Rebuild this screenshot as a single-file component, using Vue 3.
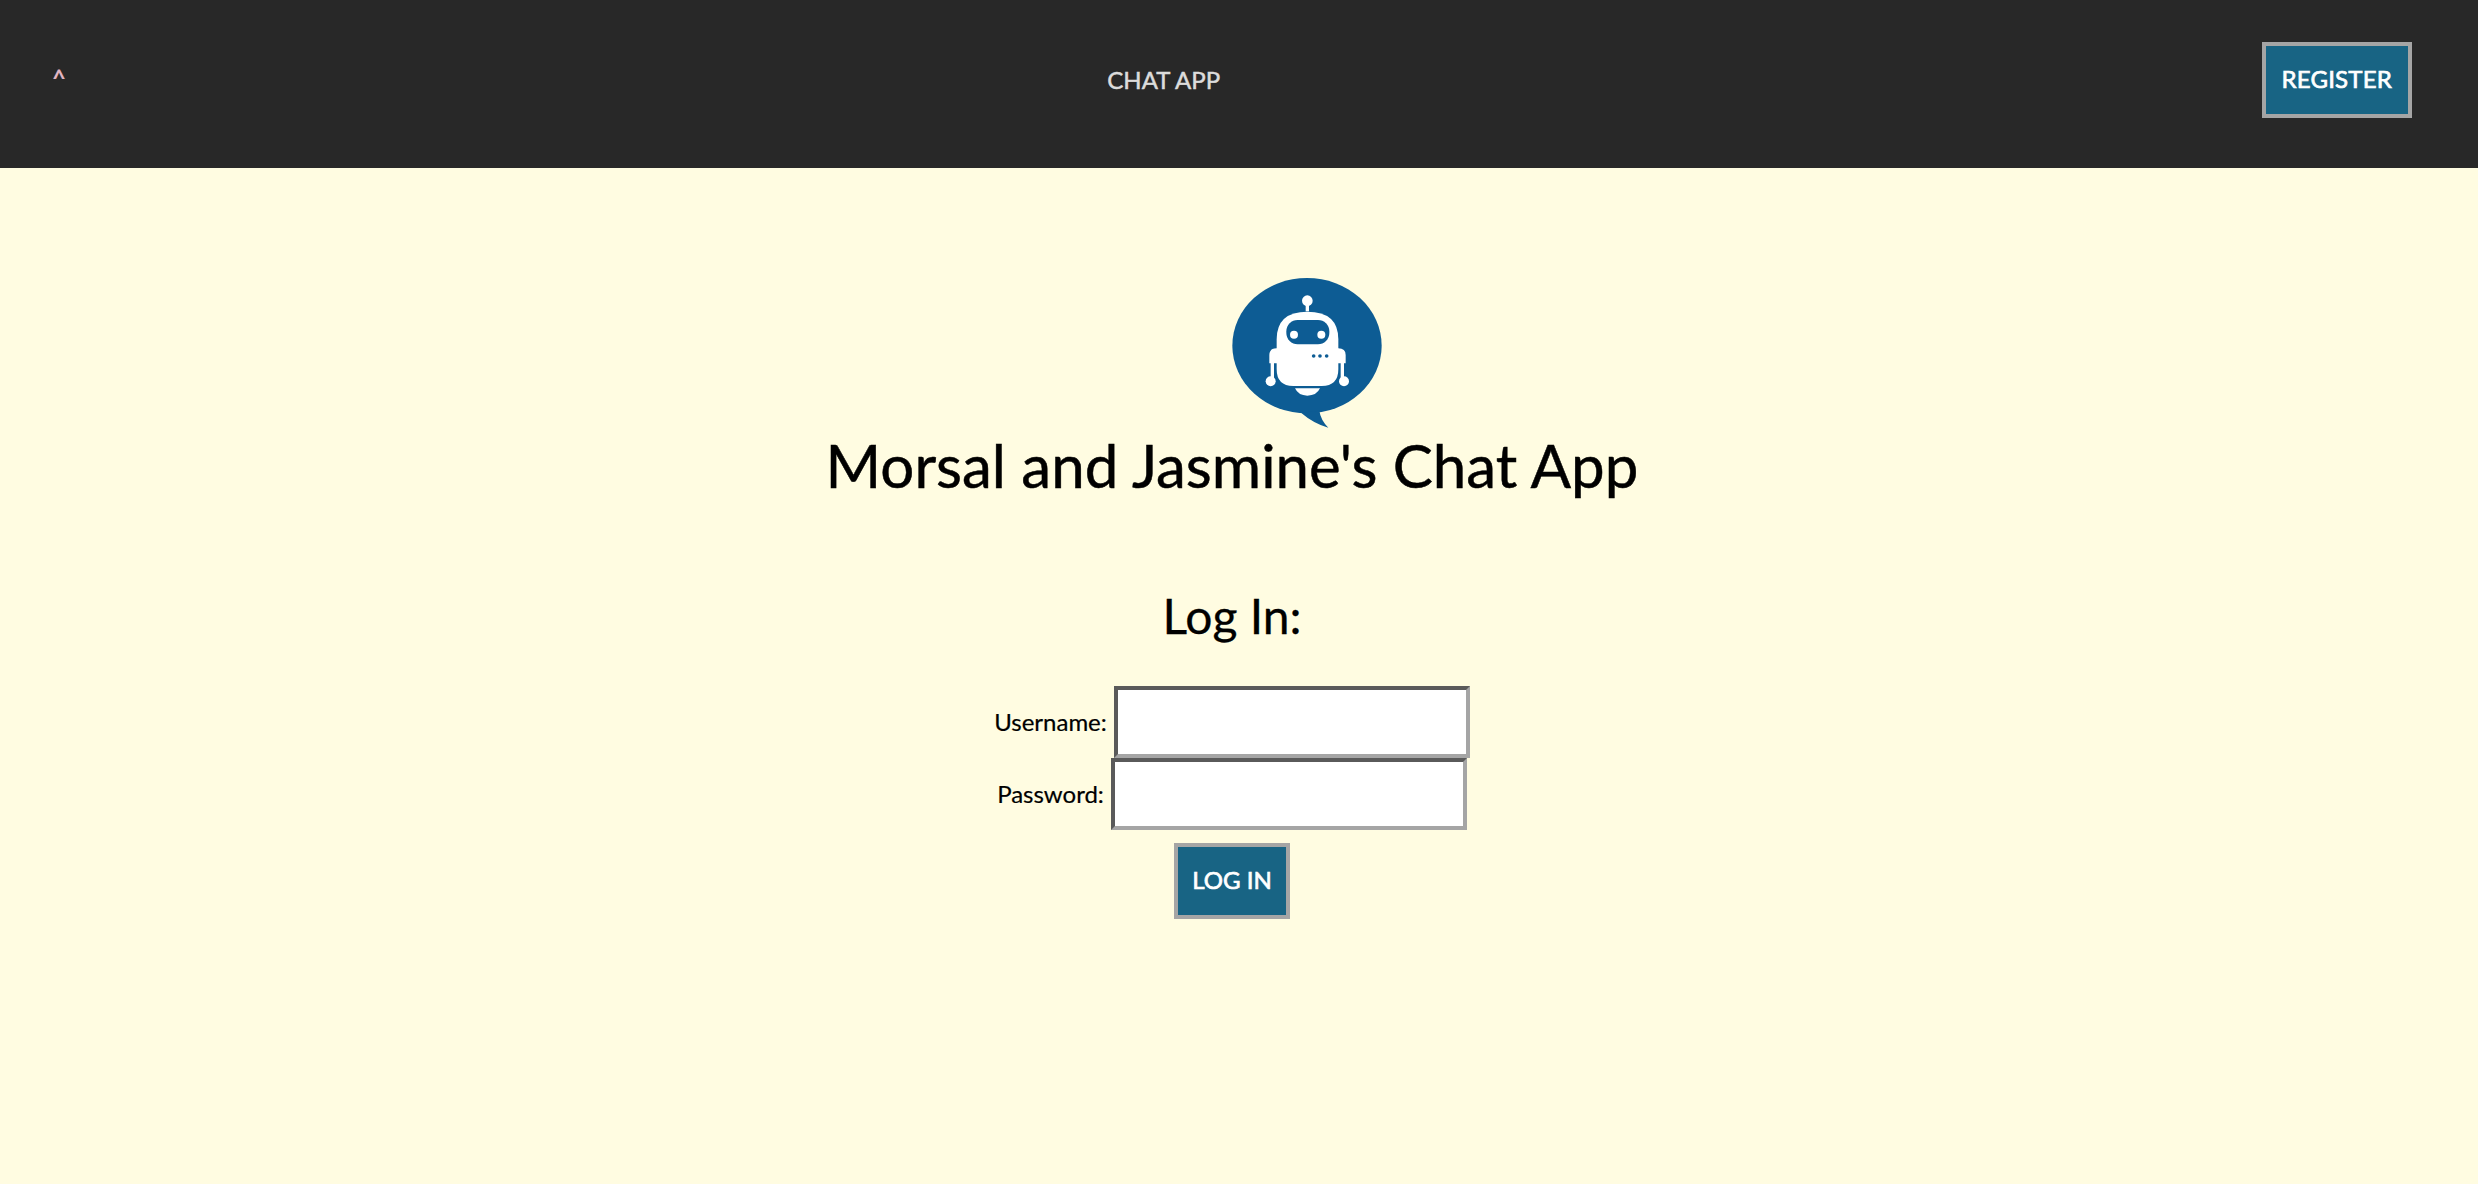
<template>
  <div class="page">
    <header class="topbar">
      <a class="caret" href="#">^</a>
      <span class="brand">CHAT APP</span>
      <button class="btn" type="button">REGISTER</button>
    </header>

    <main class="content">
      <svg class="logo" viewBox="97 54 448 450" xmlns="http://www.w3.org/2000/svg">
        <ellipse cx="321" cy="257" rx="224" ry="203" fill="#0d5c94" />
        <path d="M303 458 Q340 490 385 503 Q362 480 358 452 Z" fill="#0d5c94" />
        <g fill="#fff">
          <circle cx="322" cy="122" r="16" />
          <rect x="317" y="130" width="10" height="24" />
          <path d="M230 270 V238 Q230 155 322 155 Q415 155 415 238 V270 Z" />
          <path d="M208 310 V285 Q208 265 230 265 H415 Q437 265 437 285 V310 H415 V328 Q415 378 365 378 H280 Q230 378 230 328 V310 Z" />
          <rect x="212" y="300" width="10" height="60" />
          <rect x="422" y="300" width="10" height="60" />
          <circle cx="212" cy="364" r="15" />
          <circle cx="432" cy="364" r="15" />
          <path d="M285 385 H360 Q350 407 322 407 Q295 407 285 385 Z" />
        </g>
        <rect x="259" y="180" width="129" height="73" rx="34" fill="#0d5c94" />
        <g fill="#fff">
          <circle cx="282" cy="224" r="12" />
          <circle cx="364" cy="224" r="12" />
        </g>
        <g fill="#0d5c94">
          <circle cx="341" cy="288" r="5.5" />
          <circle cx="360" cy="288" r="5.5" />
          <circle cx="380" cy="288" r="5.5" />
        </g>
      </svg>

      <h1 class="title">Morsal and Jasmine's Chat App</h1>
      <h2 class="subtitle">Log In:</h2>

      <form class="form" @submit.prevent>
        <div class="field">
          <label for="username">Username:</label>
          <input id="username" type="text" v-model="username" />
        </div>
        <div class="field">
          <label for="password">Password:</label>
          <input id="password" type="password" v-model="password" />
        </div>
        <button class="btn login" type="submit">LOG IN</button>
      </form>
    </main>
  </div>
</template>

<script setup>
import { ref } from "vue";

const username = ref("");
const password = ref("");
</script>

<style>
html,
body {
  margin: 0;
  background: #fffce1;
}
</style>

<style scoped>
.page {
  min-height: 1184px;
  background: #fffce1;
  font-family: Lato, "Liberation Sans", sans-serif;
  color: #000;
}
.topbar {
  height: 168px;
  box-sizing: border-box;
  background: #282828;
  display: flex;
  align-items: center;
  justify-content: space-between;
  padding: 0 66px 8px 52px;
  font-size: 24px;
}
.caret {
  color: #e0b4c2;
  text-decoration: none;
  font-size: 24px;
  font-weight: 700;
  margin-top: -4px;
}
.brand {
  color: #dcdcdc;
  -webkit-text-stroke: 0.5px #dcdcdc;
  margin: -2px 0 0;
}
.btn {
  height: 76px;
  box-sizing: border-box;
  padding: 0 16px 3px;
  background: #186484;
  border: 4px solid #a5a5a5;
  color: #fff;
  font-family: inherit;
  font-size: 24px;
  font-weight: 400;
  letter-spacing: 0.2px;
  -webkit-text-stroke: 0.7px #fff;
}
.content {
  padding: 110px 14px 0 0;
  text-align: center;
}
.logo {
  display: block;
  width: 150px;
  height: 150px;
  margin-left: 50%;
}
.title {
  margin: 1px 0 0;
  font-size: 60px;
  font-weight: 400;
  -webkit-text-stroke: 0.5px #000;
}
.subtitle {
  margin: 86px 0 42px;
  font-size: 48px;
  font-weight: 400;
  -webkit-text-stroke: 0.3px #000;
}
.field {
  font-size: 24px;
  display: flex;
  justify-content: center;
  align-items: center;
  gap: 7px;
  -webkit-text-stroke: 0.2px #000;
}
.field label {
  margin-top: -2px;
}
.field input {
  width: 356px;
  height: 72px;
  box-sizing: border-box;
  padding: 0;
  background: #fff;
  border: 4px solid;
  border-color: #5a5a5a #a5a5a5 #a5a5a5 #5a5a5a;
}
.login {
  margin-top: 13px;
  padding: 0 14px 3px;
  letter-spacing: 0;
}
</style>
